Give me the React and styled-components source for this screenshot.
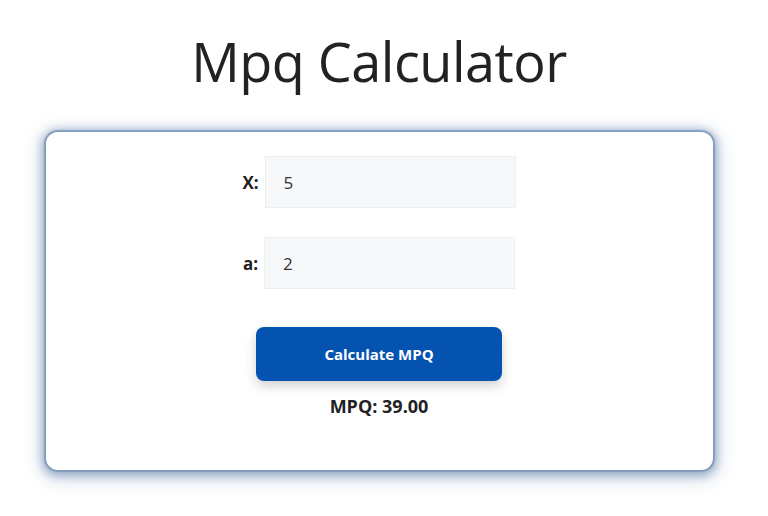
import React, { useState } from 'react'
import styled, { createGlobalStyle } from "styled-components";

const GlobalStyle = createGlobalStyle`
  body {
    margin: 0;
    background: #ffffff;
    font-family: "Open Sans", "Noto Sans", sans-serif;
    color: #212529;
  }
`;

const Page = styled.div`
  padding: 17px 10px 30px 0;
  display: flex;
  flex-direction: column;
  align-items: center;
`;

const Title = styled.h1`
  margin: 0 0 27px;
  font-size: 54px;
  font-weight: 400;
  line-height: 88px;
  color: #222;
  letter-spacing: -0.5px;
`;

const Card = styled.div`
  width: 667px;
  box-sizing: border-box;
  padding: 24px 20px 51px;
  background: #fff;
  border-radius: 12px;
  box-shadow: 0 0 1px 2px rgba(120, 148, 182, 0.8), 0 2px 8px 4px rgba(100, 132, 172, 0.55), 0 4px 18px 6px rgba(120, 150, 190, 0.3);
  display: flex;
  flex-direction: column;
  align-items: center;
`;

const Row = styled.div`
  display: flex;
  align-items: center;
  gap: 6px;
  margin-bottom: ${({last}) => last ? '38px' : '29px'};
`;

const Label = styled.label`
  font-size: 17px;
  font-weight: 700;
  color: #222;
`;

const Input = styled.input`
  width: 251px;
  height: 52px;
  box-sizing: border-box;
  padding: 0 18px;
  border: 1px solid #eceef1;
  background: #f7f8fa;
  font-family: inherit;
  font-size: 17px;
  color: #333;
  outline: none;
`;

const Button = styled.button`
  width: 246px;
  height: 54px;
  border: none;
  border-radius: 8px;
  background: #0553b1;
  color: #fff;
  font-family: inherit;
  font-size: 15px;
  font-weight: 700;
  box-shadow: 0 5px 12px rgba(0, 0, 0, 0.18);
  cursor: pointer;
`;

const Result = styled.p`
  margin: 12px 0 0;
  font-size: 18px;
  font-weight: 700;
  line-height: 26px;
  color: #222;
`;

function App() {
  const [x, setX] = useState('5')
  const [a, setA] = useState('2')
  const [mpq, setMpq] = useState(39)

  const calculate = () => {
    const xv = parseFloat(x) || 0
    const av = parseFloat(a) || 0
    setMpq(xv * xv + xv * av + 4)
  }

  return (
    <Page>
      <GlobalStyle />
      <Title>Mpq Calculator</Title>
      <Card>
        <Row>
          <Label>X:</Label>
          <Input value={x} onChange={e => setX(e.target.value)} />
        </Row>
        <Row last>
          <Label>a:</Label>
          <Input value={a} onChange={e => setA(e.target.value)} />
        </Row>
        <Button onClick={calculate}>Calculate MPQ</Button>
        <Result>MPQ: {mpq.toFixed(2)}</Result>
      </Card>
    </Page>
  )
}

export default App
